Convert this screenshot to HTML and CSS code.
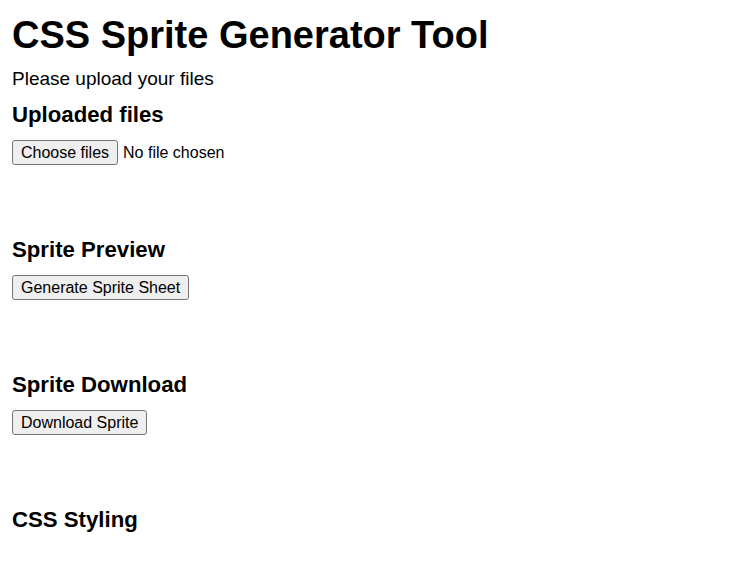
FILE: index.html
```html
<!DOCTYPE html>
<html lang="en">
<head>
<meta charset="utf-8">
<title>CSS Sprite Generator Tool</title>
<link rel="stylesheet" href="styles.css">
</head>
<body>
<div class="page">
  <h1 class="title">CSS Sprite Generator Tool</h1>
  <p class="intro">Please upload your files</p>

  <section class="block">
    <h3 class="block-title">Uploaded files</h3>
    <div class="controls">
      <button class="btn" type="button">Choose files</button>
      <span class="file-status">No file chosen</span>
    </div>
  </section>

  <section class="block">
    <h3 class="block-title">Sprite Preview</h3>
    <div class="controls">
      <button class="btn" type="button">Generate Sprite Sheet</button>
    </div>
  </section>

  <section class="block">
    <h3 class="block-title">Sprite Download</h3>
    <div class="controls">
      <button class="btn" type="button">Download Sprite</button>
    </div>
  </section>

  <section class="block block-last">
    <h3 class="block-title">CSS Styling</h3>
  </section>
</div>
</body>
</html>
```

FILE: styles.css
```css
html, body {
  margin: 0;
  padding: 0;
  background: #ffffff;
}

body {
  font-family: "Liberation Sans", Arial, Helvetica, sans-serif;
  color: #000000;
}

.page {
  padding: 13px 12px 0;
}

.title {
  margin: 0;
  font-size: 38px;
  line-height: 44px;
  font-weight: bold;
}

.intro {
  margin: 11px 0 0;
  font-size: 19px;
  line-height: 22px;
}

.block {
  margin-top: 12px;
  margin-bottom: 72px;
}

.block + .block {
  margin-top: 0;
}

.block-last {
  margin-bottom: 0;
}

.block-title {
  margin: 0 0 12px;
  font-size: 22.2px;
  line-height: 26px;
  font-weight: bold;
}

.controls {
  display: flex;
  align-items: center;
  gap: 5px;
  height: 25px;
}

.btn {
  box-sizing: border-box;
  height: 25px;
  padding: 0 8px;
  margin: 0;
  border: 1px solid #767676;
  border-radius: 3px;
  background: #efefef;
  color: #000000;
  font-family: "Liberation Sans", Arial, Helvetica, sans-serif;
  font-size: 16px;
  line-height: 23px;
}

.file-status {
  font-size: 16px;
  line-height: 22px;
}
```
